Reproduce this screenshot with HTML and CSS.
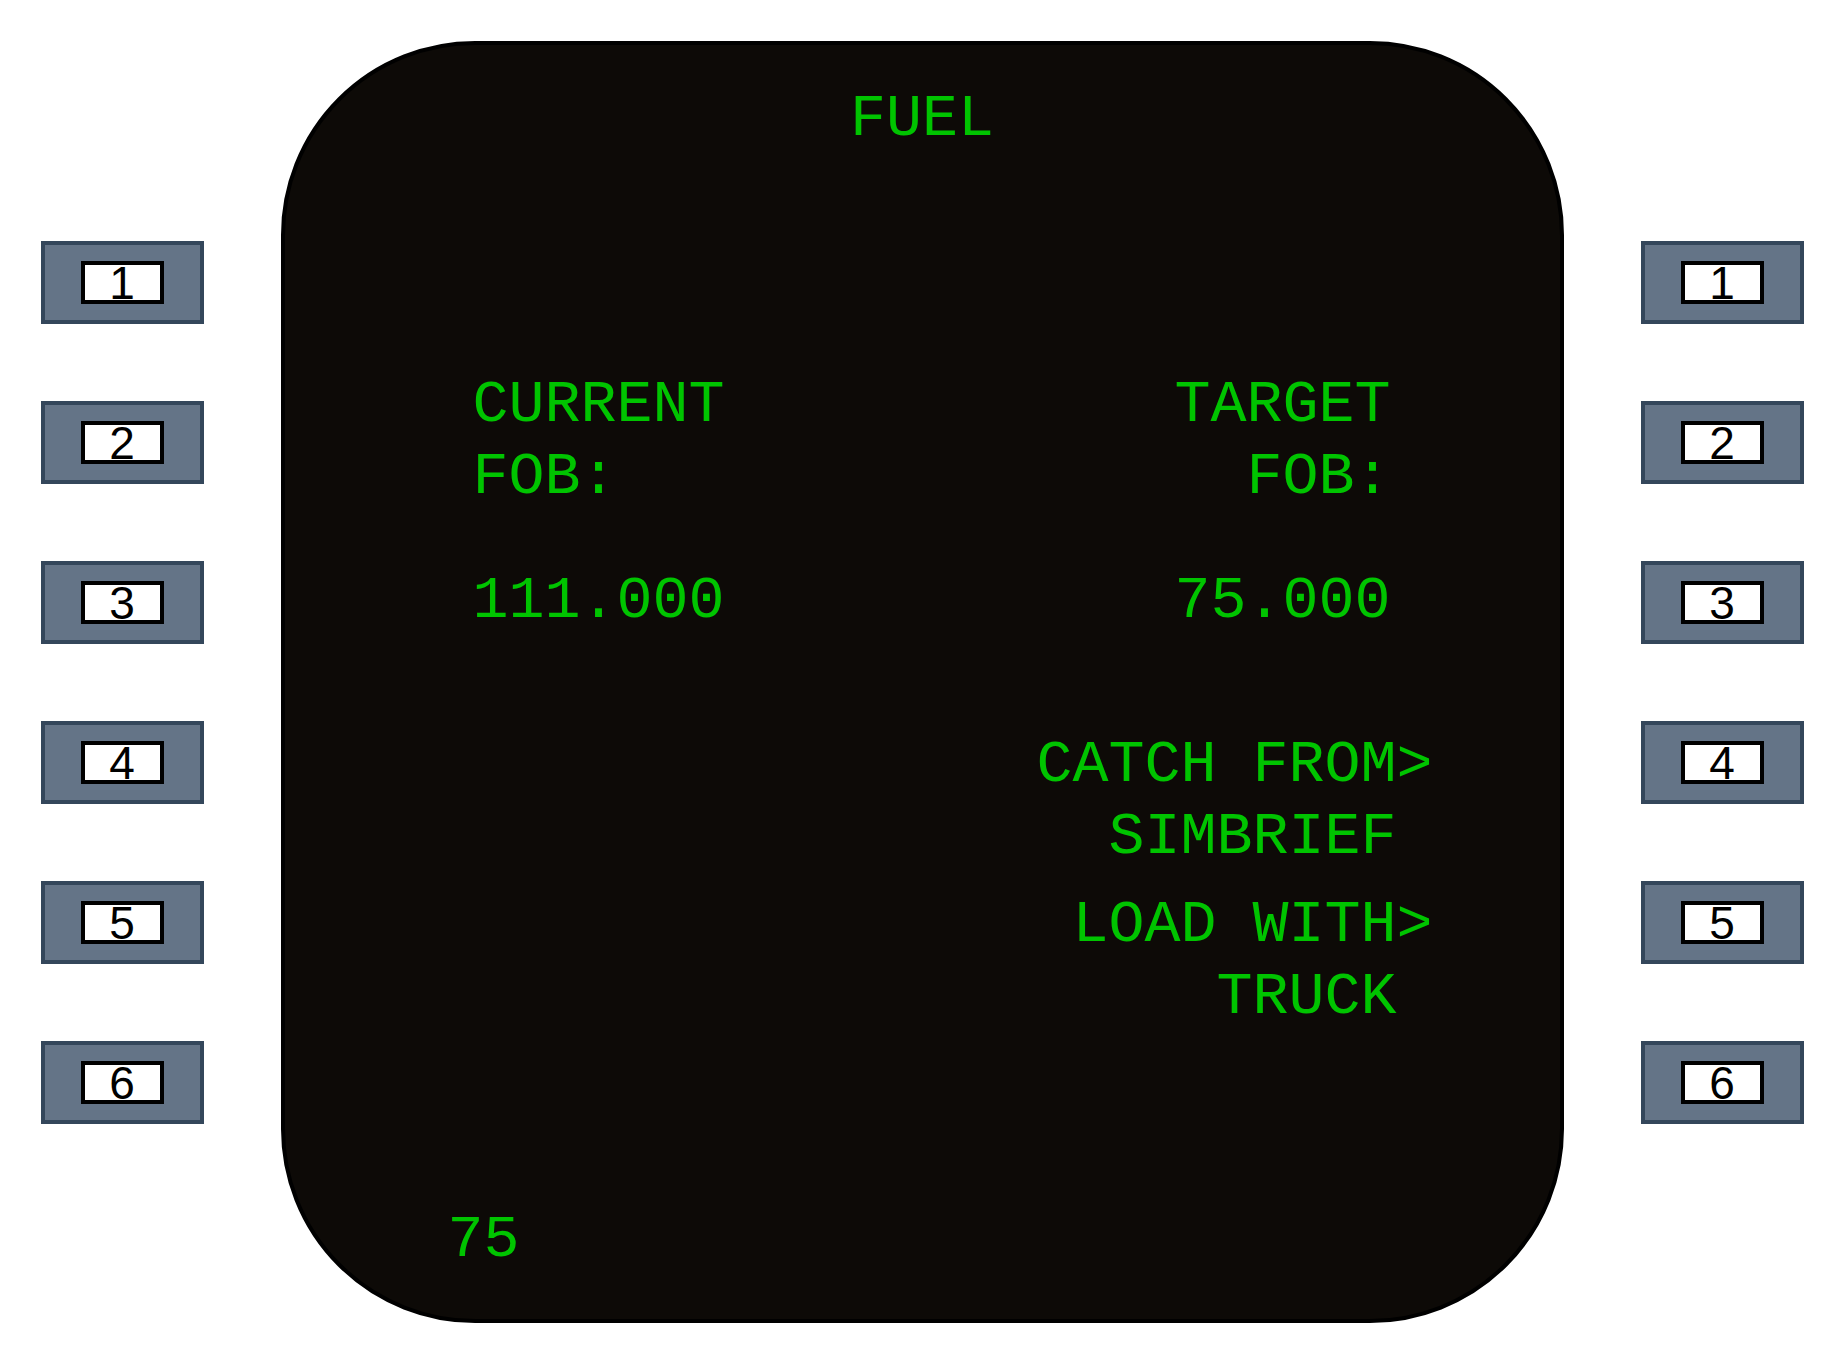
FILE: index.html
```html
<!DOCTYPE html>
<html>
<head>
  <title>MCDU - Fuel</title>
  <link rel="stylesheet" href="styles.css">
</head>
<body>
  <div class="mcdu">
    <div class="lsk-column">
      <div class="lsk"><span class="lsk-label">1</span></div>
      <div class="lsk"><span class="lsk-label">2</span></div>
      <div class="lsk"><span class="lsk-label">3</span></div>
      <div class="lsk"><span class="lsk-label">4</span></div>
      <div class="lsk"><span class="lsk-label">5</span></div>
      <div class="lsk"><span class="lsk-label">6</span></div>
    </div>

    <div class="screen">
      <div class="title">FUEL</div>

      <div class="columns">
        <div class="col col-left">
          <div class="label">CURRENT<br>FOB:</div>
          <div class="value">111.000</div>
        </div>
        <div class="col col-right">
          <div class="label">TARGET<br>FOB:</div>
          <div class="value">75.000</div>
          <div class="action">
            <div class="arrow">CATCH FROM&gt;</div>
            <div>SIMBRIEF</div>
          </div>
          <div class="action">
            <div class="arrow">LOAD WITH&gt;</div>
            <div>TRUCK</div>
          </div>
        </div>
      </div>

      <div class="scratchpad">75</div>
    </div>

    <div class="lsk-column">
      <div class="lsk"><span class="lsk-label">1</span></div>
      <div class="lsk"><span class="lsk-label">2</span></div>
      <div class="lsk"><span class="lsk-label">3</span></div>
      <div class="lsk"><span class="lsk-label">4</span></div>
      <div class="lsk"><span class="lsk-label">5</span></div>
      <div class="lsk"><span class="lsk-label">6</span></div>
    </div>
  </div>
</body>
</html>
```

FILE: styles.css
```css
body {
  margin: 0;
  background-color: #fff;
  font-family: "Liberation Sans", Arial, sans-serif;
}
.mcdu {
  height: 1364px;
  display: flex;
  align-items: center;
  justify-content: center;
  gap: 77px;
}

/* line select keys */
.lsk-column {
  display: flex;
  flex-direction: column;
  gap: 77px;
}
.lsk {
  width: 163px;
  height: 83px;
  box-sizing: border-box;
  background-color: #647487;
  border: 4px solid #34475b;
  display: flex;
  align-items: center;
  justify-content: center;
}
.lsk-label {
  width: 83px;
  height: 43px;
  box-sizing: border-box;
  background-color: #fff;
  border: 4px solid #000;
  font-size: 46px;
  line-height: 37px;
  text-align: center;
  color: #000;
}

/* display */
.screen {
  width: 1283px;
  height: 1282px;
  box-sizing: border-box;
  background-color: #0d0a07;
  border: 4px solid #000;
  border-radius: 194px;
  padding: 38px 163px 43px 163px;
  display: flex;
  flex-direction: column;
  font-family: "Courier New", "Liberation Mono", monospace;
  font-size: 60px;
  line-height: 72px;
  color: #00c400;
}
.title {
  text-align: center;
}
.columns {
  margin-top: 214px;
  display: flex;
  justify-content: space-between;
}
.col-left {
  padding-left: 25px;
}
.col-right {
  text-align: right;
}
.col-right .label,
.col-right .value {
  margin-right: 6px;
}
.value {
  margin-top: 52px;
}
.action {
  margin-top: 16px;
}
.col-right .value + .action {
  margin-top: 92px;
}
.arrow {
  margin-right: -1ch;
}
.scratchpad {
  margin-top: auto;
}
```
